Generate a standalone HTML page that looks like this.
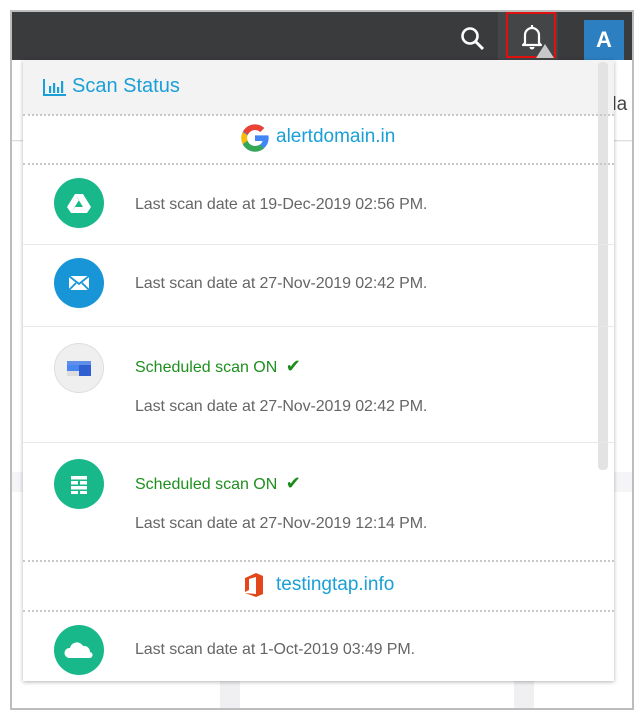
<!DOCTYPE html>
<html><head><style>
body{margin:0;width:643px;height:718px;background:#fff;font-family:"Liberation Sans",Arial,sans-serif;position:relative;overflow:hidden}
.frame{position:absolute;left:10px;top:10px;width:620px;height:696px;border:2px solid #bdbdbd;background:#f5f5f7;overflow:hidden}
.top{position:absolute;left:0;top:0;width:620px;height:48px;background:#3a3b3d}
.abs{position:absolute}
.panel{position:absolute;left:11px;top:48px;width:591px;height:621px;background:#fff;box-shadow:0 1px 4px rgba(0,0,0,.3);overflow:hidden}
.dot{position:absolute;left:0;width:591px;border-top:2px dotted #c8c8c8}
.line{position:absolute;left:0;width:591px;border-top:1px solid #e8e8e8}
.ic{position:absolute;left:31px;width:50px;height:50px;border-radius:50%;background:#19b88a}
.t{position:absolute;left:112px;font-size:16px;color:#666;letter-spacing:-0.1px}
.g{position:absolute;left:112px;font-size:16px;color:#1e8f1e}
.dom{position:absolute;font-size:19px;color:#1a9fd6}
</style></head><body>
<div class="frame">
 <div class="top"></div>
 <div class="abs" style="left:0;top:48px;width:620px;height:80px;background:#fff;border-bottom:1px solid #ddd"></div>
 <div class="abs" style="left:594px;top:82px;font-size:19px;color:#444">da</div>
 <div class="abs" style="left:0;top:130px;width:620px;height:330px;background:#fff"></div>
 <div class="abs" style="left:0;top:480px;width:620px;height:220px;background:#fff"></div>
 <div class="abs" style="left:208px;top:620px;width:20px;height:80px;background:#f0f0f3"></div>
 <div class="abs" style="left:502px;top:620px;width:20px;height:80px;background:#f0f0f3"></div>
 <svg class="abs" style="left:447px;top:13px" width="28" height="28" viewBox="0 0 28 28"><circle cx="11" cy="11" r="7.5" fill="none" stroke="#fff" stroke-width="2.6"/><line x1="16.5" y1="16.5" x2="24" y2="24" stroke="#fff" stroke-width="3"/></svg>
 <div class="abs" style="left:486px;top:0;width:60px;height:48px;background:#444547"></div>
 <div class="abs" style="left:494px;top:0;width:50px;height:46px;border:2px solid #e01010;box-sizing:border-box;top:0"></div>
 <svg class="abs" style="left:507px;top:10px" width="26" height="30" viewBox="0 0 26 30"><path d="M13 3v2M6 21V13a7 7 0 0 1 14 0v8l2 2H4z" fill="none" stroke="#fff" stroke-width="2.2" stroke-linejoin="round"/><path d="M10.5 25a2.5 2.5 0 0 0 5 0z" fill="#fff"/></svg>
 <div class="abs" style="left:524px;top:32px;width:0;height:0;border-left:9px solid transparent;border-right:9px solid transparent;border-bottom:14px solid #c8c8c8"></div>
 <div class="abs" style="left:572px;top:8px;width:40px;height:40px;background:#2c7fc1;color:#fff;font-weight:bold;font-size:22px;text-align:center;line-height:40px">A</div>
 <div class="panel">
  <div class="abs" style="left:0;top:0;width:591px;height:55px;background:#f3f3f3"></div>
  <svg class="abs" style="left:20px;top:18px" width="24" height="18" viewBox="0 0 24 18"><path d="M1 1v16h22" fill="none" stroke="#1a9fd6" stroke-width="2"/><rect x="6" y="8" width="2.2" height="7" fill="#1a9fd6"/><rect x="10" y="5" width="2.2" height="10" fill="#1a9fd6"/><rect x="14" y="9" width="2.2" height="6" fill="#1a9fd6"/><rect x="18" y="3" width="2.2" height="12" fill="#1a9fd6"/></svg>
  <div class="abs" style="left:49px;top:15px;font-size:20px;color:#1a9fd6">Scan Status</div>
  <div class="abs" style="left:575px;top:2px;width:10px;height:408px;background:#e3e3e3;border-radius:4px"></div>
  <div class="dot" style="top:54px"></div>
  <svg class="abs" style="left:216px;top:62px" width="32" height="32" viewBox="0 0 48 48"><path d="M43.6 20H24v8.5h11.3C33.7 33.6 29.3 36 24 36c-6.6 0-12-5.4-12-12s5.4-12 12-12c3 0 5.8 1.1 7.9 3l6-6C34.2 5.6 29.3 3.5 24 3.5 12.7 3.5 3.5 12.7 3.5 24S12.7 44.5 24 44.5 44.5 35.3 44.5 24c0-1.4-.1-2.7-.4-4z" fill="#4285f4"/><path d="M6.3 14.1l7 5.1C15.2 14.9 19.3 12 24 12c3 0 5.8 1.1 7.9 3l6-6C34.2 5.6 29.3 3.5 24 3.5c-7.9 0-14.7 4.5-17.7 10.6z" fill="#ea4335"/><path d="M24 44.5c5.2 0 10-2 13.5-5.2l-6.3-5.3C29.2 35.3 26.7 36 24 36c-5.3 0-9.7-3.4-11.3-8.1l-6.9 5.3C9.1 39.7 16 44.5 24 44.5z" fill="#34a853"/><path d="M12.7 27.9C12.3 26.7 12 25.4 12 24s.3-2.7.7-3.9l-7-5.1C4.3 17.7 3.5 20.8 3.5 24s.8 6.3 2.2 9.1z" fill="#fbbc05"/></svg>
  <div class="dom" style="left:253px;top:66px">alertdomain.in</div>
  <div class="dot" style="top:103px"></div>
  <div class="ic" style="top:118px"><svg width="50" height="50" viewBox="0 0 50 50"><path d="M21 16h8l8 13h-8z M21 16l-8 13 4 6 8-13z M17 35h16l4-6H21z" fill="#fff"/></svg></div>
  <div class="t" style="top:136px">Last scan date at 19-Dec-2019 02:56 PM.</div>
  <div class="line" style="top:184px"></div>
  <div class="ic" style="top:198px;background:#1795d6"><svg width="50" height="50" viewBox="0 0 50 50"><rect x="15" y="18" width="20" height="14" fill="#fff"/><path d="M15 18l10 8 10-8M15 32l7-7M35 32l-7-7" fill="none" stroke="#1795d6" stroke-width="1.8"/></svg></div>
  <div class="t" style="top:215px">Last scan date at 27-Nov-2019 02:42 PM.</div>
  <div class="line" style="top:266px"></div>
  <div class="ic" style="top:283px;background:#efefef;border:1px solid #ddd;width:48px;height:48px"><svg width="48" height="48" viewBox="0 0 48 48"><rect x="12" y="17" width="24" height="4" fill="#5f8fe8"/><rect x="12" y="21" width="24" height="6" fill="#4a86f0"/><rect x="24" y="21" width="12" height="11" fill="#2f5fd0"/><rect x="12" y="27" width="12" height="5" fill="#ddd"/></svg></div>
  <div class="g" style="top:296px">Scheduled scan ON <span style="font-size:18px;color:#1a8a1a;margin-left:4px">✔</span></div>
  <div class="t" style="top:338px">Last scan date at 27-Nov-2019 02:42 PM.</div>
  <div class="line" style="top:382px"></div>
  <div class="ic" style="top:399px"><svg width="50" height="50" viewBox="0 0 50 50"><g fill="#fff"><rect x="17" y="17" width="16" height="3.5"/><rect x="17" y="22" width="7" height="3.5"/><rect x="26" y="22" width="7" height="3.5"/><rect x="17" y="27" width="16" height="3.5"/><rect x="17" y="32" width="7" height="3"/><rect x="26" y="32" width="7" height="3"/></g></svg></div>
  <div class="g" style="top:413px">Scheduled scan ON <span style="font-size:18px;color:#1a8a1a;margin-left:4px">✔</span></div>
  <div class="t" style="top:455px">Last scan date at 27-Nov-2019 12:14 PM.</div>
  <div class="dot" style="top:500px"></div>
  <svg class="abs" style="left:220px;top:512px" width="22" height="26" viewBox="0 0 22 26"><path d="M2 6l11-5 7 3v18l-7 3-11-4 11 1V5l-7 2v11l-4 2z" fill="#e3461b"/></svg>
  <div class="dom" style="left:253px;top:514px">testingtap.info</div>
  <div class="dot" style="top:550px"></div>
  <div class="ic" style="top:565px"><svg width="50" height="50" viewBox="0 0 50 50"><path d="M15 33a5 5 0 0 1 1-10 7 7 0 0 1 13-2 6 6 0 0 1 7 6 3 3 0 0 1-1 6z" fill="#fff"/></svg></div>
  <div class="t" style="top:581px">Last scan date at 1-Oct-2019 03:49 PM.</div>
 </div>
</div>
</body></html>
